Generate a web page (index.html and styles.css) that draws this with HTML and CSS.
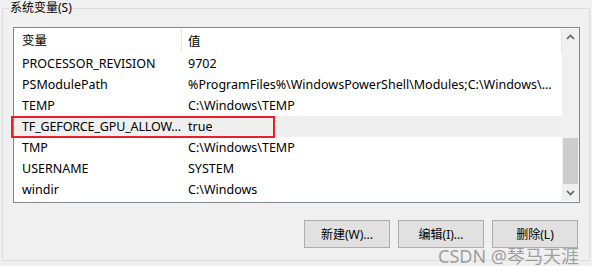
FILE: index.html
```html
<!DOCTYPE html>
<html>
<head>
<meta charset="utf-8">
<link rel="stylesheet" href="styles.css">
</head>
<body>
<fieldset class="group">
  <legend class="legend">系统变量(S)</legend>
  <div class="listbox">
    <div class="list">
      <div class="row head">
        <div class="c1">变量</div>
        <div class="c2">值</div>
      </div>
      <div class="row"><div class="c1">PROCESSOR_REVISION</div><div class="c2">9702</div></div>
      <div class="row"><div class="c1">PSModulePath</div><div class="c2">%ProgramFiles%\WindowsPowerShell\Modules;C:\Windows\...</div></div>
      <div class="row"><div class="c1">TEMP</div><div class="c2">C:\Windows\TEMP</div></div>
      <div class="row sel"><div class="c1 tight">TF_GEFORCE_GPU_ALLOW...</div><div class="c2">true</div></div>
      <div class="row"><div class="c1">TMP</div><div class="c2">C:\Windows\TEMP</div></div>
      <div class="row"><div class="c1">USERNAME</div><div class="c2">SYSTEM</div></div>
      <div class="row"><div class="c1">windir</div><div class="c2">C:\Windows</div></div>
    </div>
    <div class="scrollbar">
      <svg class="arrow" width="17" height="17" viewBox="0 0 17 17"><path d="M5 10 L8.5 6.5 L12 10" fill="none" stroke="#606060" stroke-width="1.6"/></svg>
      <div class="track"><div class="thumb"></div></div>
      <svg class="arrow" width="17" height="17" viewBox="0 0 17 17"><path d="M5 7 L8.5 10.5 L12 7" fill="none" stroke="#606060" stroke-width="1.6"/></svg>
    </div>
  </div>
  <div class="buttons">
    <button class="btn">新建(W)...</button>
    <button class="btn">编辑(I)...</button>
    <button class="btn">删除(L)</button>
  </div>
  <div class="highlight"></div>
  <div class="watermark">CSDN @琴马天涯</div>
</fieldset>
</body>
</html>
```

FILE: styles.css
```css
html, body {
  margin: 0;
  padding: 0;
  background: #f0f0f0;
  width: 592px;
  height: 266px;
  overflow: hidden;
  font-family: "Noto Sans", "Noto Sans CJK SC", sans-serif;
  font-size: 12.5px;
  color: #000;
}

.group {
  position: relative;
  margin: 0 2px;
  padding: 11px 9px 0 10px;
  border: 1px solid #dcdcdc;
  height: 248px;
  box-sizing: content-box;
}

.legend {
  padding: 0 1px;
  margin-left: -4px;
  line-height: 16px;
  height: 16px;
  font-size: 12px;
  color: #000;
}

.listbox {
  display: flex;
  width: 565px;
  height: 174px;
  border: 1px solid #828790;
  background: #fff;
}

.list {
  flex: 1;
  display: flex;
  flex-direction: column;
  min-width: 0;
}

.row {
  display: flex;
  height: 21px;
  align-items: center;
  white-space: nowrap;
  overflow: hidden;
}

.row.head {
  height: 25px;
  border-right: 1px solid #e5e5e5;
}

.c1 {
  width: 168px;
  flex: none;
  padding-left: 8px;
  box-sizing: border-box;
  overflow: hidden;
}

.c1.tight {
  letter-spacing: -0.15px;
  overflow: visible;
}

.c2 {
  padding-left: 6px;
  overflow: hidden;
}

.head .c1 {
  border-right: 1px solid #e5e5e5;
  height: 23px;
  line-height: 23px;
}

.row.sel {
  background: #efefef;
}

.scrollbar {
  width: 17px;
  flex: none;
  background: #f0f0f0;
  display: flex;
  flex-direction: column;
  margin: 1px 0;
}

.arrow {
  display: block;
  flex: none;
}

.track {
  flex: 1;
  padding-top: 92px;
}

.thumb {
  width: 15px;
  margin-left: 1px;
  height: 46px;
  background: #cdcdcd;
}

.buttons {
  display: flex;
  justify-content: flex-end;
  gap: 8px;
  margin-top: 17px;
  padding-right: 2px;
}

.btn {
  width: 86px;
  height: 28px;
  background: #e1e1e1;
  border: 1px solid #adadad;
  font-family: "Noto Sans", "Noto Sans CJK SC", sans-serif;
  font-size: 12px;
  color: #000;
  padding: 0;
}

.highlight {
  position: absolute;
  left: 8px;
  top: 100px;
  width: 260px;
  height: 18px;
  border: 2px solid #e8202a;
}

.watermark {
  position: absolute;
  right: 10px;
  top: 229px;
  font-size: 18px;
  line-height: 22px;
  color: rgba(110, 110, 110, 0.65);
  white-space: nowrap;
}
```
